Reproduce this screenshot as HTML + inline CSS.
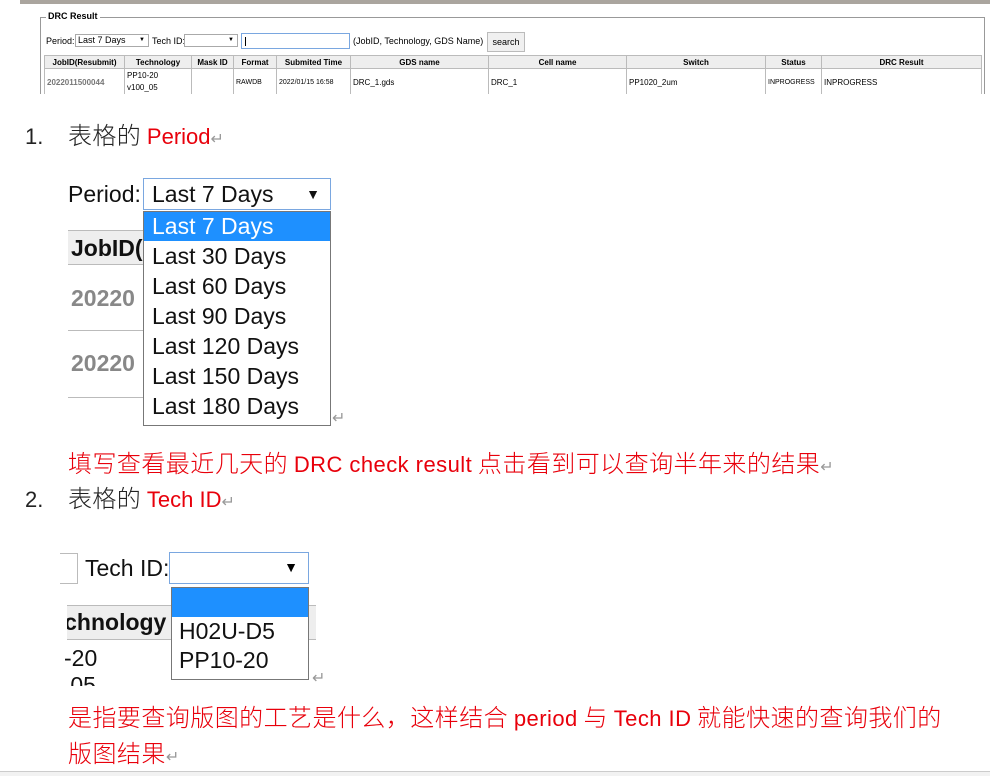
<!DOCTYPE html>
<html><head><meta charset="utf-8"><style>
*{margin:0;padding:0;box-sizing:border-box}
body{width:990px;height:776px;background:#fff;position:relative;overflow:hidden;font-family:"Liberation Sans","Noto Sans CJK SC",sans-serif}
.a{position:absolute;white-space:nowrap}
.s{font-size:9px;color:#000}
table{border-collapse:collapse;position:absolute;left:44px;top:55px;font-size:8px}
td,th{border:1px solid #bbb;padding:0 2px;height:13px;text-align:left;font-weight:normal}
th{background:#eee;font-weight:bold;text-align:center}
.cn{font-size:24px;color:#222;font-family:"Noto Sans CJK SC",sans-serif;font-weight:300}
.cn .l{font-family:"Liberation Sans",sans-serif;font-size:22px;font-weight:normal}
.sp{letter-spacing:0.45px}
.red{color:#e8000b}
.ret{color:#999;font-size:16px;font-family:"Liberation Sans",sans-serif}
.big{font-size:23px;color:#111;font-family:"Liberation Sans",sans-serif}
</style></head><body>
<div class="a" style="left:20px;top:0;width:970px;height:4px;background:#aaa59e"></div>
<div class="a" style="left:40px;top:17px;width:945px;height:90px;border:1px solid #999;border-bottom:none"></div>
<div class="a s" style="left:46px;top:11px;background:#fff;padding:0 2px;font-weight:bold;font-size:9px">DRC Result</div>
<div class="a s" style="left:46px;top:36px">Period:</div>
<div class="a s" style="left:75px;top:34px;width:74px;height:13px;border:1px solid #aaa;padding-left:2px;line-height:11px">Last 7 Days <span style="position:absolute;right:3px;font-size:6px">▼</span></div>
<div class="a s" style="left:152px;top:36px">Tech ID:</div>
<div class="a" style="left:184px;top:34px;width:54px;height:13px;border:1px solid #aaa;font-size:6px"><span style="position:absolute;right:3px;top:2px">▼</span></div>
<div class="a" style="left:241px;top:33px;width:109px;height:16px;border:1px solid #7aa7e0"><div style="position:absolute;left:3px;top:3px;width:1px;height:9px;background:#000"></div></div>
<div class="a s" style="left:353px;top:36px">(JobID, Technology, GDS Name)</div>
<div class="a s" style="left:487px;top:32px;width:38px;height:20px;border:1px solid #bbb;background:#f0f0f0;line-height:18px;text-align:center">search</div>
<table>
<tr><th style="width:80px">JobID(Resubmit)</th><th style="width:67px">Technology</th><th style="width:42px">Mask ID</th><th style="width:43px">Format</th><th style="width:74px">Submited Time</th><th style="width:138px">GDS name</th><th style="width:138px">Cell name</th><th style="width:139px">Switch</th><th style="width:56px">Status</th><th style="width:160px">DRC Result</th></tr>
<tr style="height:27px"><td style="color:#777;font-weight:bold">2022011500044</td><td style="line-height:12px">PP10-20<br>v100_05</td><td></td><td style="font-size:7px">RAWDB</td><td style="font-size:7px">2022/01/15 16:58</td><td>DRC_1.gds</td><td>DRC_1</td><td>PP1020_2um</td><td style="font-size:7px">INPROGRESS</td><td>INPROGRESS</td></tr>
</table>
<div class="a" style="left:0;top:94px;width:990px;height:20px;background:#fff"></div>

<div class="a cn" style="left:25px;top:116px"><span class="l">1.</span></div>
<div class="a cn" style="left:68px;top:116px;letter-spacing:0.4px">表格的 <span class="red l" style="letter-spacing:0">Period</span><span class="ret">↵</span></div>

<div class="a big" style="left:68px;top:181px">Period:</div>
<div class="a big" style="left:143px;top:178px;width:188px;height:32px;border:1px solid #7aa7e0;padding-left:8px;line-height:30px">Last 7 Days<span style="position:absolute;right:10px;font-size:14px">▼</span></div>
<div class="a" style="left:68px;top:230px;width:76px;height:35px;background:#eee;border-top:1px solid #bbb;border-bottom:1px solid #bbb"></div>
<div class="a big" style="left:71px;top:235px;font-weight:bold">JobID(</div>
<div class="a big" style="left:71px;top:285px;font-weight:bold;color:#888">20220</div>
<div class="a" style="left:68px;top:330px;width:76px;height:1px;background:#bbb"></div>
<div class="a big" style="left:71px;top:350px;font-weight:bold;color:#888">20220</div>
<div class="a" style="left:68px;top:397px;width:76px;height:1px;background:#bbb"></div>
<div class="a" style="left:143px;top:211px;width:188px;height:215px;background:#fff;border:1px solid #777"></div>
<div class="a" style="left:144px;top:212px;width:186px;height:29px;background:#1e90ff"></div>
<div class="a big" style="left:152px;top:212px;line-height:29px;color:#fff">Last 7 Days</div>
<div class="a big" style="left:152px;top:242px;line-height:29px">Last 30 Days</div>
<div class="a big" style="left:152px;top:272px;line-height:29px">Last 60 Days</div>
<div class="a big" style="left:152px;top:302px;line-height:29px">Last 90 Days</div>
<div class="a big" style="left:152px;top:332px;line-height:29px">Last 120 Days</div>
<div class="a big" style="left:152px;top:362px;line-height:29px">Last 150 Days</div>
<div class="a big" style="left:152px;top:392px;line-height:29px">Last 180 Days</div>
<div class="a ret" style="left:332px;top:408px">↵</div>

<div class="a cn red sp" style="left:68px;top:444px">填写查看最近几天的 <span class="l">DRC check result</span> 点击看到可以查询半年来的结果<span class="ret">↵</span></div>
<div class="a cn" style="left:25px;top:479px"><span class="l">2.</span></div>
<div class="a cn" style="left:68px;top:479px;letter-spacing:0.4px">表格的 <span class="red l" style="letter-spacing:0">Tech ID</span><span class="ret">↵</span></div>

<div class="a" style="left:60px;top:553px;width:18px;height:31px;border:1px solid #bbb;border-left:none"></div>
<div class="a big" style="left:85px;top:555px">Tech ID:</div>
<div class="a" style="left:169px;top:552px;width:140px;height:32px;border:1px solid #7aa7e0"><span style="position:absolute;right:10px;top:6px;font-size:14px">▼</span></div>
<div class="a" style="left:67px;top:605px;width:104px;height:35px;background:#eee;border-top:1px solid #bbb;border-bottom:1px solid #bbb;overflow:hidden"><div class="big" style="position:absolute;left:-28px;top:3px;font-weight:bold">Technology</div></div>
<div class="a" style="left:308px;top:605px;width:8px;height:35px;background:#eee;border-top:1px solid #bbb;border-bottom:1px solid #bbb"></div>
<div class="a big" style="left:64px;top:645px">-20</div>
<div class="a" style="left:60px;top:672px;width:120px;height:14px;overflow:hidden"><div class="big" style="position:absolute;left:4px;top:0">.05</div></div>
<div class="a" style="left:0;top:686px;width:990px;height:10px;background:#fff"></div>
<div class="a" style="left:171px;top:587px;width:138px;height:93px;background:#fff;border:1px solid #777"></div>
<div class="a" style="left:172px;top:588px;width:136px;height:29px;background:#1e90ff"></div>
<div class="a big" style="left:179px;top:617px;line-height:29px">H02U-D5</div>
<div class="a big" style="left:179px;top:646px;line-height:29px">PP10-20</div>
<div class="a ret" style="left:312px;top:668px">↵</div>

<div class="a cn red sp" style="left:68px;top:698px">是指要查询版图的工艺是什么，这样结合 <span class="l">period</span> 与 <span class="l">Tech ID</span> 就能快速的查询我们的</div>
<div class="a cn red sp" style="left:68px;top:734px">版图结果<span class="ret">↵</span></div>
<div class="a" style="left:0;top:771px;width:990px;height:5px;background:#f2f2f2;border-top:1px solid #ccc"></div>
</body></html>
